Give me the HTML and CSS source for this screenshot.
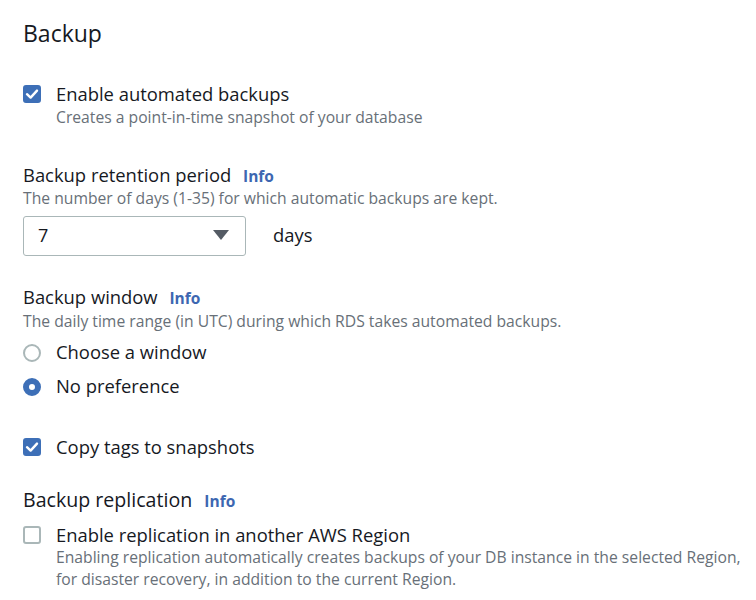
FILE: index.html
```html
<!DOCTYPE html>
<html>
<head>
<meta charset="utf-8">
<link rel="stylesheet" href="styles.css">
</head>
<body>
<div class="panel">
  <h2 class="title">Backup</h2>

  <div class="option first">
    <span class="checkbox checked"><svg viewBox="0 0 18 18" width="18" height="18"><path d="M4 9.2 L7.6 12.6 L14 5.6" fill="none" stroke="#fff" stroke-width="2.4" stroke-linecap="round" stroke-linejoin="round"/></svg></span>
    <div class="option-text">
      <div class="option-label">Enable automated backups</div>
      <div class="desc">Creates a point-in-time snapshot of your database</div>
    </div>
  </div>

  <div class="field retention">
    <div class="field-label">Backup retention period <span class="info">Info</span></div>
    <div class="desc">The number of days (1-35) for which automatic backups are kept.</div>
    <div class="select-row">
      <div class="select"><span class="select-value">7</span><span class="caret"></span></div>
      <span class="unit">days</span>
    </div>
  </div>

  <div class="field window">
    <div class="field-label">Backup window <span class="info">Info</span></div>
    <div class="desc">The daily time range (in UTC) during which RDS takes automated backups.</div>
    <div class="radios">
      <div class="radio-row"><span class="radio"></span><span class="option-label">Choose a window</span></div>
      <div class="radio-row"><span class="radio selected"></span><span class="option-label">No preference</span></div>
    </div>
  </div>

  <div class="option copy">
    <span class="checkbox checked"><svg viewBox="0 0 18 18" width="18" height="18"><path d="M4 9.2 L7.6 12.6 L14 5.6" fill="none" stroke="#fff" stroke-width="2.4" stroke-linecap="round" stroke-linejoin="round"/></svg></span>
    <div class="option-text">
      <div class="option-label">Copy tags to snapshots</div>
    </div>
  </div>

  <div class="field replication">
    <div class="field-label large">Backup replication <span class="info">Info</span></div>
    <div class="option repl-option">
      <span class="checkbox"></span>
      <div class="option-text">
        <div class="option-label">Enable replication in another AWS Region</div>
        <div class="desc">Enabling replication automatically creates backups of your DB instance in the selected Region,<br>for disaster recovery, in addition to the current Region.</div>
      </div>
    </div>
  </div>
</div>
</body>
</html>
```

FILE: styles.css
```css
html, body {
  margin: 0;
  padding: 0;
  background: #ffffff;
}
body {
  font-family: "Open Sans", "Noto Sans", "Liberation Sans", sans-serif;
  color: #16191f;
}
.panel {
  padding: 18px 0 0 23px;
}
.title {
  margin: 0;
  font-size: 23px;
  line-height: 30px;
  font-weight: 400;
}
.option {
  display: flex;
  align-items: flex-start;
}
.option.first {
  margin-top: 35px;
}
.checkbox {
  flex: none;
  width: 18px;
  height: 18px;
  box-sizing: border-box;
  border: 2px solid #aab7b8;
  border-radius: 3px;
  margin-top: 2px;
  margin-right: 15px;
  display: flex;
  align-items: center;
  justify-content: center;
  background: #fff;
}
.checkbox.checked {
  background: #3d6fb7;
  border-color: #3d6fb7;
}
.checkbox svg {
  display: block;
  flex: none;
}
.option-label {
  font-size: 18.4px;
  line-height: 22px;
}
.desc {
  font-size: 15.7px;
  line-height: 22px;
  color: #687078;
}
.option-text .desc {
  margin-top: 1px;
}
.field-label {
  font-size: 18.4px;
  line-height: 24px;
}
.field-label.large {
  font-size: 19.6px;
}
.info {
  color: #3d67b1;
  font-weight: 700;
  font-size: 15.5px;
  margin-left: 7px;
}
.field.retention {
  margin-top: 35px;
}
.retention .desc {
  margin-top: -1px;
}
.select-row {
  display: flex;
  align-items: center;
  margin-top: 8px;
}
.select {
  width: 223px;
  height: 40px;
  box-sizing: border-box;
  border: 1px solid #aab7b8;
  border-radius: 3px;
  display: flex;
  align-items: center;
  justify-content: space-between;
  padding: 0 16px 0 14px;
  margin-top: -1px;
}
.select-value {
  font-size: 18px;
  line-height: 22px;
  margin-top: -2px;
}
.caret {
  width: 0;
  height: 0;
  border-left: 8px solid transparent;
  border-right: 8px solid transparent;
  border-top: 10px solid #545b64;
  margin-top: -2px;
}
.unit {
  margin-left: 27px;
  font-size: 18.4px;
  line-height: 22px;
  margin-top: -4px;
}
.field.window {
  margin-top: 29px;
}
.radios {
  margin-top: 8px;
}
.radio-row {
  display: flex;
  align-items: center;
  height: 24px;
}
.radio-row + .radio-row {
  margin-top: 10px;
}
.radio {
  flex: none;
  width: 18px;
  height: 18px;
  box-sizing: border-box;
  border: 2px solid #aab7b8;
  border-radius: 50%;
  margin-right: 15px;
  background: #fff;
  margin-top: 2px;
}
.radio.selected {
  border: 6px solid #3d6fb7;
}
.option.copy {
  margin-top: 38px;
}
.field.replication {
  margin-top: 30px;
}
.repl-option {
  margin-top: 11px;
}
.repl-option .desc {
  margin-top: 0;
}
```
